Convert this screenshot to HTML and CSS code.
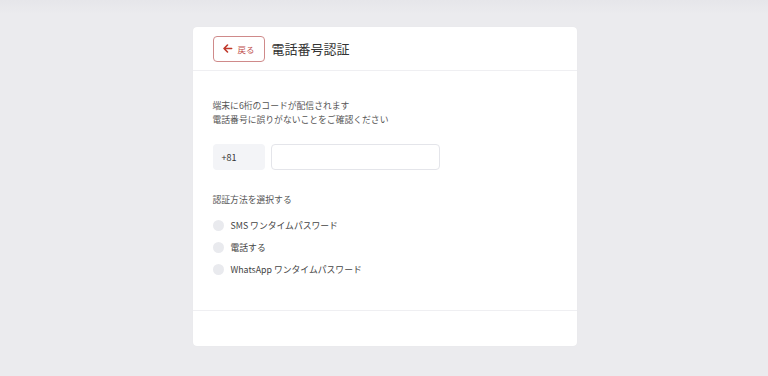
FILE: index.html
```html
<!DOCTYPE html>
<html lang="ja">
<head>
<meta charset="utf-8">
<link rel="stylesheet" href="styles.css">
</head>
<body>
<main class="page">
  <section class="card">
    <header class="card-head">
      <button class="back">
        <svg class="back-icon" viewBox="0 0 12 12" width="11" height="11"><path d="M10.5 6H2.2M6 2.2L2.2 6 6 9.8" fill="none" stroke="#c0392b" stroke-width="1.8" stroke-linecap="round" stroke-linejoin="round"/></svg>
        <span>戻る</span>
      </button>
      <h1 class="title">電話番号認証</h1>
    </header>
    <div class="card-body">
      <p class="desc">端末に6桁のコードが配信されます<br>電話番号に誤りがないことをご確認ください</p>
      <div class="phone-row">
        <div class="cc">+81</div>
        <div class="phone-input"></div>
      </div>
      <p class="label">認証方法を選択する</p>
      <ul class="options">
        <li class="opt"><span class="radio"></span><span>SMS ワンタイムパスワード</span></li>
        <li class="opt"><span class="radio"></span><span>電話する</span></li>
        <li class="opt"><span class="radio"></span><span>WhatsApp ワンタイムパスワード</span></li>
      </ul>
    </div>
    <footer class="card-foot"></footer>
  </section>
</main>
</body>
</html>
```
FILE: styles.css
```css
* { box-sizing: border-box; }
html, body { margin: 0; padding: 0; }
body {
  background: linear-gradient(#e6e6ea 0, #ebebee 14px, #ebebee 100%);
  font-family: "Noto Sans CJK JP", "Noto Sans", sans-serif;
  color: #444;
  height: 376px;
  overflow: hidden;
}
.page {
  padding-top: 27px;
  padding-left: 1px;
}
.card {
  width: 384px;
  margin: 0 auto;
  background: #fff;
  border-radius: 4px;
  box-shadow: 0 0 1px rgba(0,0,0,0.06);
}
.card-head {
  height: 44px;
  display: flex;
  align-items: center;
  padding: 0 20px;
  gap: 7px;
  border-bottom: 1px solid #efeff2;
}
.back {
  width: 52px;
  height: 26px;
  border: 1px solid #cf8a8a;
  border-radius: 4px;
  background: #fff;
  display: flex;
  align-items: center;
  justify-content: center;
  gap: 4px;
  padding: 0;
  font-family: inherit;
  font-size: 8.5px;
  color: #c0504d;
}
.back-icon { display: block; }
.title {
  margin: 0;
  font-size: 13px;
  font-weight: 400;
  color: #333;
}
.card-body {
  padding: 28px 20px 35px;
}
.desc {
  margin: 0;
  font-size: 8.8px;
  line-height: 14px;
  color: #555;
}
.phone-row {
  margin-top: 17px;
  display: flex;
  gap: 6px;
}
.cc {
  width: 52px;
  height: 26px;
  background: #f3f4f7;
  border-radius: 4px;
  font-size: 9px;
  color: #333;
  display: flex;
  align-items: center;
  padding-left: 9px;
}
.phone-input {
  width: 169px;
  height: 26px;
  border: 1px solid #e4e5ea;
  border-radius: 4px;
}
.label {
  margin: 23px 0 0;
  font-size: 8.8px;
  line-height: 14px;
  color: #555;
}
.options {
  list-style: none;
  margin: 12px 0 0;
  padding: 0;
  display: flex;
  flex-direction: column;
  gap: 10px;
}
.opt {
  height: 12px;
  display: flex;
  align-items: center;
  gap: 7px;
  font-size: 8.8px;
  color: #444;
}
.radio {
  width: 11px;
  height: 11px;
  border-radius: 50%;
  background: #e9eaee;
  flex: none;
}
.card-foot {
  height: 36px;
  border-top: 1px solid #efeff2;
}
```
